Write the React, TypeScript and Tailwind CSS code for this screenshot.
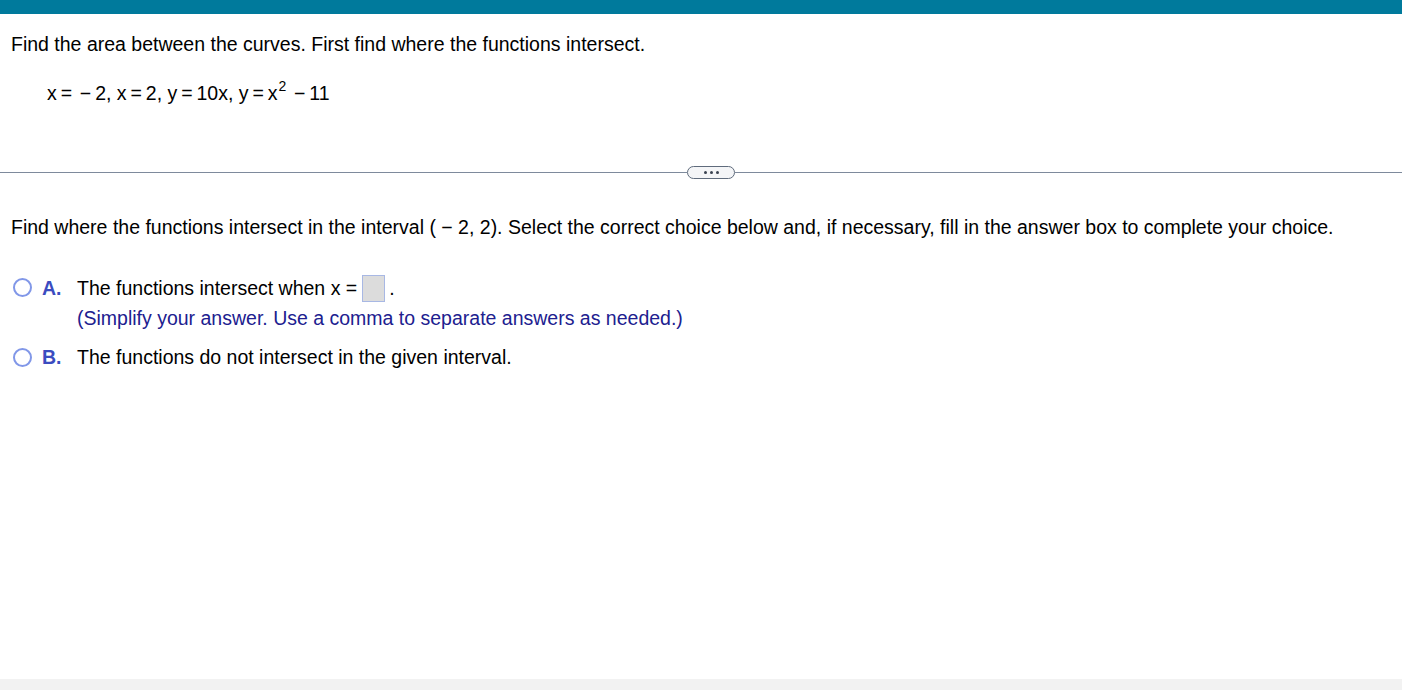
export default function App() {
  return (
    <div
      className="flex h-[690px] w-full flex-col bg-white text-[19.5px] text-black"
      style={{ fontFamily: '"Liberation Sans", Arial, sans-serif' }}
    >
      <div className="h-[14px] w-full shrink-0 bg-[#007a9c]" />
      <div className="flex-1">
        <p className="ml-[11px] mt-[19px] leading-[22px]">
          Find the area between the curves. First find where the functions intersect.
        </p>
        <p className="ml-[47px] mt-[27px] h-[22px] leading-[22px]">
          x{"\u2009"}={"\u2009\u2009"}&minus;{"\u2009"}2, x{"\u2009"}={"\u2009"}2, y{"\u2009"}={"\u2009"}10x, y{"\u2009"}={"\u2009"}x
          <sup className="top-[-9px] ml-[1px] text-[14px]">2</sup>
          {"\u2009\u2009"}&minus;{"\u2009"}11
        </p>

        <div className="mt-[62px] flex items-center">
          <div className="h-px w-[687px] shrink-0 bg-[#7e8a9c]" />
          <button className="flex h-[13px] w-[48px] items-center justify-center gap-[3px] rounded-full border border-[#5f6b7c] bg-[#f4f5f7]">
            <span className="h-[3px] w-[3px] rounded-full bg-[#3a4250]" />
            <span className="h-[3px] w-[3px] rounded-full bg-[#3a4250]" />
            <span className="h-[3px] w-[3px] rounded-full bg-[#3a4250]" />
          </button>
          <div className="h-px flex-1 bg-[#7e8a9c]" />
        </div>

        <p className="ml-[11px] mt-[37px] leading-[22px]">
          Find where the functions intersect in the interval ( &minus; 2, 2). Select the correct choice below and, if necessary, fill in the answer box to complete your choice.
        </p>

        <div className="ml-[13px] mt-[37px] flex flex-col">
          <div className="flex items-start">
            <span className="mt-[3px] h-[19px] w-[19px] shrink-0 rounded-full border-2 border-[#8197e8]" />
            <span className="ml-[10px] w-[35px] font-bold leading-[26px] text-[#3b4cc0]">A.</span>
            <div className="flex flex-col">
              <div className="flex h-[27px] items-center">
                <span>The functions intersect when x =</span>
                <span className="ml-[5px] inline-block h-[27px] w-[23px] border border-[#a8b8e4] bg-[#dcdcdc]" />
                <span className="ml-[4px]">.</span>
              </div>
              <p className="mt-[5px] leading-[22px] text-[#20208f]">
                (Simplify your answer. Use a comma to separate answers as needed.)
              </p>
            </div>
          </div>
          <div className="mt-[17px] flex items-start">
            <span className="mt-[2px] h-[19px] w-[19px] shrink-0 rounded-full border-2 border-[#8197e8]" />
            <span className="ml-[10px] w-[35px] font-bold leading-[22px] text-[#3b4cc0]">B.</span>
            <span className="leading-[22px]">The functions do not intersect in the given interval.</span>
          </div>
        </div>
      </div>
      <div className="h-[11px] w-full shrink-0 bg-[#f2f2f2]" />
    </div>
  );
}
